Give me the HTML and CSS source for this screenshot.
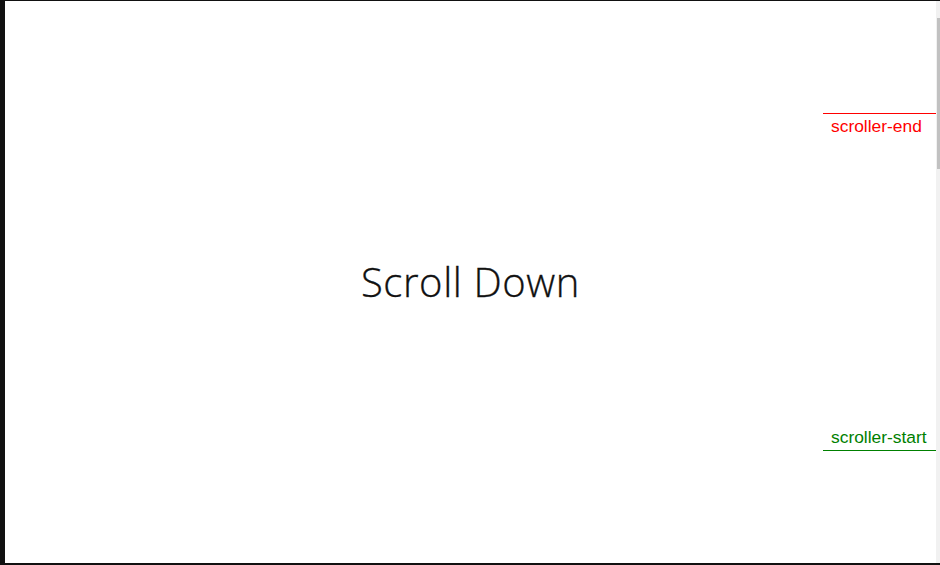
FILE: index.html
```html
<!DOCTYPE html>
<html lang="en">
<head>
<meta charset="utf-8">
<title>Scroll Down</title>
<link rel="stylesheet" href="styles.css">
</head>
<body>
  <main class="viewport">
    <h1 class="headline">Scroll Down</h1>
    <div class="marker marker-end">scroller-end</div>
    <div class="marker marker-start">scroller-start</div>
  </main>
  <div class="scrollbar"><div class="scrollbar-thumb"></div></div>
</body>
</html>
```

FILE: styles.css
```css
html, body {
  height: 100%;
}

body {
  margin: 0;
  height: 565px;
  box-sizing: border-box;
  padding: 1px 0 2px 5px;
  background: #111111;
  display: flex;
  overflow: hidden;
}

.viewport {
  position: relative;
  flex: 1;
  background: #ffffff;
  display: grid;
  place-items: center;
}

.headline {
  margin: 0;
  font-family: "Open Sans", "DejaVu Sans", sans-serif;
  font-weight: 300;
  font-size: 40px;
  letter-spacing: 0.6px;
  color: #111111;
  line-height: 1;
  -webkit-text-stroke: 0.3px #111111;
}

/* scroll markers pinned to the right edge of the scroller */
.marker {
  position: absolute;
  right: 0;
  width: 113px;
  box-sizing: border-box;
  padding: 4px 8px;
  font-family: "Liberation Sans", Arial, sans-serif;
  font-size: 17.4px;
  line-height: 20px;
  white-space: nowrap;
}

.marker-end {
  top: 112px;
  padding-top: 2px;
  color: #ff0000;
  border-top: 1px solid #ff0000;
}

.marker-start {
  top: 422px;
  padding-bottom: 3px;
  color: #008000;
  border-bottom: 1px solid #008000;
}

.scrollbar {
  width: 4px;
  background: #f1f1f1;
  padding-top: 17px;
  box-sizing: border-box;
}

.scrollbar-thumb {
  margin-left: 1px;
  width: 3px;
  height: 151px;
  background: #c1c1c1;
}
```
